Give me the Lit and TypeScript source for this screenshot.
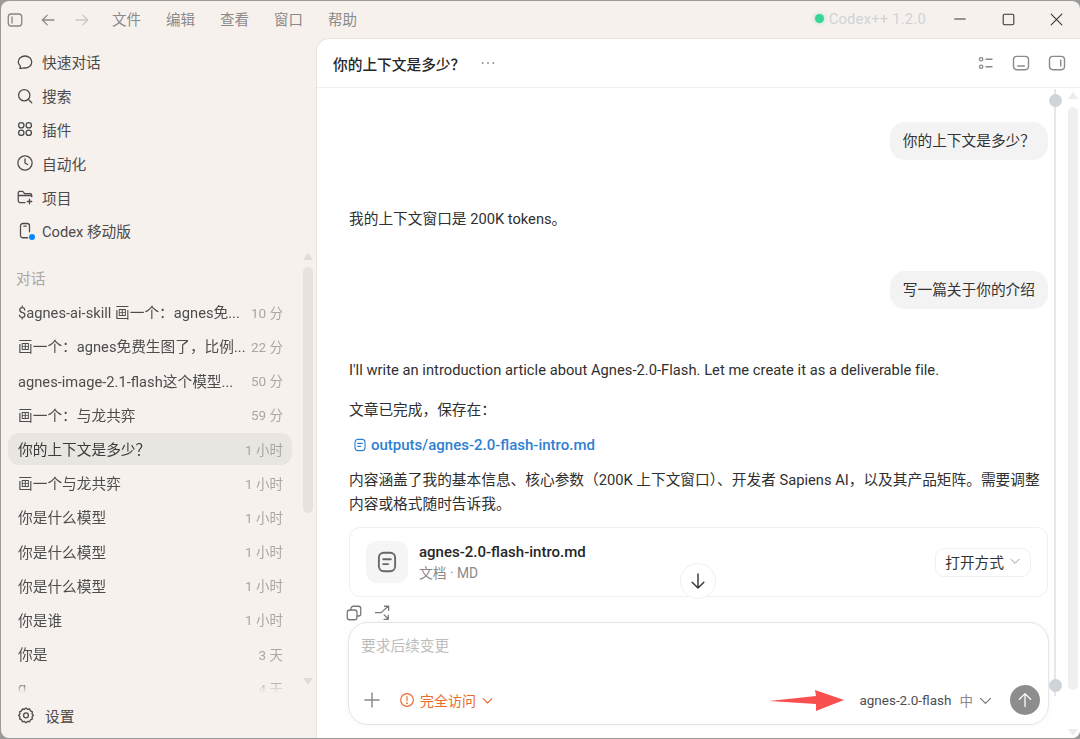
import { LitElement, html, css, svg } from "lit";
import { customElement } from "lit/decorators.js";

const ico = (body: unknown, size = 18, vb = 24) => html`<svg
  width=${size}
  height=${size}
  viewBox="0 0 ${vb} ${vb}"
  fill="none"
  stroke="currentColor"
  stroke-width="1.7"
  stroke-linecap="round"
  stroke-linejoin="round"
>${body}</svg>`;

const icons = {
  panel: svg`<rect x="3" y="4" width="18" height="16" rx="4"/><path d="M8 8v8"/>`,
  back: svg`<path d="M20 12H5M11 5.5 4.5 12l6.5 6.5"/>`,
  forward: svg`<path d="M4 12h15M13 5.5l6.5 6.5-6.5 6.5"/>`,
  chat: svg`<path d="M12 4c5 0 9 3.4 9 8s-4 8-9 8c-2 0-5 .8-7 .6 1-1 1.2-2.2.8-3.2C4 15.800 3 14 3 12c0-4.600 4-8 9-8z"/>`,
  search: svg`<circle cx="11" cy="11" r="7.500"/><path d="m17 17 4 4"/>`,
  plugins: svg`<circle cx="7" cy="7" r="3.600"/><circle cx="17" cy="7" r="3.600"/><circle cx="7" cy="17" r="3.600"/><circle cx="17" cy="17" r="3.600"/>`,
  clock: svg`<circle cx="12" cy="12" r="9.500"/><path d="M12 6.500V12l3.500 2"/>`,
  folder: svg`<path d="M12 19.500H6a3 3 0 0 1-3-3V6.500a2 2 0 0 1 2-2h4l2.500 3H19a2 2 0 0 1 2 2v2M3 10h18M18 15v6M15 18h6"/>`,
  phone: svg`<path d="M15.500 21H9a3 3 0 0 1-3-3V5a3 3 0 0 1 3-3h6a3 3 0 0 1 3 3v8M10.500 5.500h3"/>`,
  gear: svg`<path d="M12 2.500l2 1.900 2.800-.4 1.200 2.500 2.500 1.300-.4 2.800L22 12.500l-1.900 1.900.4 2.800-2.500 1.300-1.200 2.500-2.800-.4-2 1.900-2-1.900-2.800.4-1.200-2.500-2.500-1.300.4-2.800L2 12.500l1.900-1.900-.4-2.800L6 6.500l1.200-2.500 2.800.4z"/><circle cx="12" cy="12.500" r="3.200"/>`,
  list: svg`<circle cx="5.500" cy="7" r="2.300"/><circle cx="5.500" cy="17" r="2.300"/><path d="M12 7h8M12 17h8"/>`,
  bottomPanel: svg`<rect x="3" y="4" width="18" height="16" rx="4"/><path d="M8 15.500h8"/>`,
  sidePanel: svg`<rect x="3" y="4" width="18" height="16" rx="4"/><path d="M16.500 8.500v7"/>`,
  doc: svg`<rect x="4.500" y="3.500" width="15" height="17" rx="4.500"/><path d="M8.500 9.500h7M8.500 14h4.500"/>`,
  down: svg`<path d="M12 3.500v17M5 13.500l7 7 7-7"/>`,
  copy: svg`<rect x="3" y="8" width="13" height="13" rx="3.500"/><path d="M8 8V6a3 3 0 0 1 3-3h7a3 3 0 0 1 3 3v7a3 3 0 0 1-3 3h-2"/>`,
  branch: svg`<path d="M2 11.500h7.500L19 3M14 3h5.500v5.500M13.500 14.500 19 20M19 15v5.500h-5.500"/>`,
  plus: svg`<path d="M12 3.500v17M3.500 12h17"/>`,
  warn: svg`<circle cx="12" cy="12" r="9.500"/><path d="M12 7v6"/><circle cx="12" cy="16.700" r=".5"/>`,
  chevron: svg`<path d="m5 9 7 7 7-7"/>`,
  up: svg`<path d="M12 20.500v-17M4.500 11 12 3.500l7.500 7.500"/>`,
  minimize: svg`<path d="M3 12h18"/>`,
  maximize: svg`<rect x="3.500" y="3.500" width="17" height="17" rx="2.500"/>`,
  close: svg`<path d="M3.500 3.500l17 17M20.500 3.500l-17 17"/>`,
  dots: svg`<g fill="currentColor" stroke="none"><circle cx="4" cy="12" r="1.500"/><circle cx="12" cy="12" r="1.500"/><circle cx="20" cy="12" r="1.500"/></g>`,
};

const navItems = [
  ["快速对话", icons.chat],
  ["搜索", icons.search],
  ["插件", icons.plugins],
  ["自动化", icons.clock],
  ["项目", icons.folder],
  ["Codex 移动版", icons.phone],
] as const;

const threads = [
  ["$agnes-ai-skill 画一个：agnes免...", "10 分"],
  ["画一个：agnes免费生图了，比例...", "22 分"],
  ["agnes-image-2.1-flash这个模型...", "50 分"],
  ["画一个：与龙共弈", "59 分"],
  ["你的上下文是多少？", "1 小时"],
  ["画一个与龙共弈", "1 小时"],
  ["你是什么模型", "1 小时"],
  ["你是什么模型", "1 小时"],
  ["你是什么模型", "1 小时"],
  ["你是谁", "1 小时"],
  ["你是", "3 天"],
  ["q", "4 天"],
];

@customElement("app-root")
export class AppRoot extends LitElement {
  static styles = css`
    :host {
      display: block;
      width: 1080px;
      height: 739px;
      overflow: hidden;
      background: #9c9a98;
      font-family: "Roboto", "Noto Sans CJK SC", sans-serif;
      font-size: 14.7px;
      color: #2b2b2b;
    }
    svg { flex: none; }
    .window {
      position: relative;
      width: 1079px;
      height: 737px;
      margin: 1px 0 0 1px;
      background: #f7f1ee;
      border-radius: 8px;
      display: grid;
      grid-template-columns: 315px 1fr;
      grid-template-rows: 37px 1fr;
      overflow: hidden;
    }
    .titlebar {
      grid-column: 1 / 3;
      display: flex;
      align-items: center;
      padding: 0 0 0 5px;
      color: #858585;
    }
    .tb-icon { display: flex; margin-right: 15px; }
    .nav-arrow { display: flex; margin-right: 16px; color: #8b8b8b; }
    .nav-arrow.off { color: #c9c7c5; margin-right: 21px; }
    .menu { display: flex; gap: 25px; color: #8a8a8a; margin-bottom: 2px; font-size: 14.5px; }
    .status {
      margin-left: auto;
      display: flex;
      align-items: center;
      gap: 5px;
      color: #cfd3d6;
      margin-bottom: 2px;
      letter-spacing: 0.25px;
    }
    .dot {
      width: 9px;
      height: 9px;
      border-radius: 50%;
      background: #35d596;
      box-shadow: 0 0 4px #35d59680;
    }
    .controls { display: flex; margin-left: 10px; color: #333; }
    .controls span { width: 48px; display: flex; justify-content: center; }
    aside {
      display: flex;
      flex-direction: column;
      min-height: 0;
      position: relative;
    }
    .nav { padding: 7px 0 0 15px; }
    .nav-row {
      height: 33.8px;
      display: flex;
      align-items: center;
      gap: 10px;
      color: #4b4b4b;
    }
    .nav-icon { position: relative; display: flex; width: 16px; }
    .blue-dot {
      position: absolute;
      right: -3px;
      bottom: 0;
      width: 6px;
      height: 6px;
      border-radius: 50%;
      background: #0a84ff;
    }
    .section {
      margin: 19px 0 0 15px;
      height: 24px;
      line-height: 24px;
      color: #aaa7a4;
    }
    .threads {
      height: 397px;
      overflow: hidden;
      padding: 5px 0 0 7px;
      width: 284px;
      -webkit-mask-image: linear-gradient(#000 97%, transparent 100%);
      mask-image: linear-gradient(#000 97%, transparent 100%);
    }
    .thread {
      height: 32px;
      margin-bottom: 2.200px;
      border-radius: 11px;
      display: flex;
      align-items: center;
      justify-content: space-between;
      padding: 0 9px 0 10px;
      color: #4d4d4d;
    }
    .thread.active { background: #e9e5e1; color: #3b3b3b; }
    .thread b { font-weight: 400; white-space: nowrap; }
    .thread i { font-style: normal; flex: none; color: #a9a6a3; font-size: 13.500px; }
    .settings {
      margin-top: auto;
      height: 42px;
      display: flex;
      align-items: center;
      gap: 10px;
      padding: 0 0 2px 16px;
      color: #4b4b4b;
    }
    .sb-track {
      position: absolute;
      left: 302px;
      top: 229px;
      width: 10px;
      height: 246px;
      border-radius: 5px;
      background: #e8e2de;
    }
    .sb-up, .sb-down {
      position: absolute;
      left: 302px;
      width: 0;
      height: 0;
      border-left: 5px solid transparent;
      border-right: 5px solid transparent;
    }
    .sb-up { top: 215px; border-bottom: 7px solid #e2dcd8; }
    .sb-down { top: 640px; border-top: 7px solid #e2dcd8; }

    main {
      position: relative;
      background: #fff;
      border-top-left-radius: 13px;
      border-top: 1px solid #e6e3e1;
      border-left: 1px solid #e6e3e1;
      display: flex;
      flex-direction: column;
      min-height: 0;
    }
    header {
      height: 48px;
      flex: none;
      display: flex;
      align-items: center;
      padding: 0 13px 0 16px;
      border-bottom: 1px solid #f0efee;
      color: #8a8a8a;
    }
    header h1 {
      margin: 0 15px 0 0;
      font-size: 14.7px;
      font-weight: 500;
      color: #262626;
    }
    .dots { display: flex; color: #909090; }
    .head-actions { margin-left: auto; display: flex; gap: 16px; align-items: center; }
    .chat {
      flex: 1;
      min-height: 0;
      padding: 34px 32px 0;
      color: #2f2f2f;
    }
    .bubble-row { display: flex; justify-content: flex-end; }
    .bubble {
      height: 38px;
      line-height: 38px;
      padding: 0 13px;
      background: #f3f3f3;
      border-radius: 15px;
      color: #333;
    }
    p { margin: 0; line-height: 24px; }
    .answer-1 { margin: 47px 0 0; }
    .bubble-row.second { margin-top: 40px; }
    .answer-2 { margin-top: 49px; letter-spacing: 0.03px; }
    .gap { margin-top: 16px; }
    .gap-link { margin-top: 11px; }
    .link {
      display: flex;
      align-items: center;
      gap: 3px;
      color: #2f80d2;
      font-weight: 500;
      font-size: 15px;
      padding-left: 3px;
    }
    .file {
      margin-top: 11px;
      height: 68px;
      border: 1px solid #f1f0ef;
      border-radius: 11px;
      display: flex;
      align-items: center;
      padding: 0 16px;
      gap: 11px;
    }
    .file-icon {
      width: 42px;
      height: 42px;
      border-radius: 11px;
      background: #f5f5f5;
      color: #666;
      display: flex;
      align-items: center;
      justify-content: center;
    }
    .file-name { font-weight: 500; font-size: 15px; color: #262626; line-height: 21px; }
    .file-type { color: #8a8a8a; font-size: 13.800px; line-height: 20px; }
    .open {
      margin-left: auto;
      box-sizing: border-box;
      height: 29px;
      padding: 0 8px 2px 9px;
      border: 1px solid #f1f0ef;
      border-radius: 9px;
      display: flex;
      align-items: center;
      gap: 4px;
      color: #333;
    }
    .open svg { color: #999; }
    .tools {
      box-sizing: border-box;
      display: flex;
      gap: 11px;
      height: 25px;
      padding-top: 6px;
      align-items: center;
      color: #777;
      margin: 0 0 0 -4px;
    }
    .composer {
      box-sizing: border-box;
      height: 103px;
      margin: 0 -1px;
      border: 1px solid #e6e5e4;
      border-radius: 20px;
      box-shadow: 0 0 6px #0000000a;
      padding: 12px 8px 9px 12px;
      display: flex;
      flex-direction: column;
      background: #fff;
    }
    .placeholder { color: #bdbdbd; line-height: 22px; }
    .comp-row { margin-top: auto; display: flex; align-items: center; height: 30px; }
    .plus { color: #888; display: flex; margin: 0 17px 0 1px; }
    .access { color: #ea6a2a; display: flex; align-items: center; gap: 5px; font-size: 14px; }
    .access svg:last-child { margin-left: -1px; }
    .model {
      position: relative;
      margin-left: auto;
      display: flex;
      align-items: center;
      gap: 4px;
      color: #4f4f4f;
      font-size: 13.500px;
    }
    .model .tier { color: #8a8a8a; margin-left: 4px; }
    .model svg { color: #777; }
    .send {
      margin-left: 16px;
      width: 30px;
      height: 30px;
      border-radius: 50%;
      background: #8d8d8d;
      color: #fff;
      display: flex;
      align-items: center;
      justify-content: center;
    }
    .to-bottom {
      position: absolute;
      left: 363px;
      top: 524px;
      width: 34px;
      height: 34px;
      background: #fff;
      border: 1px solid #efefef;
      border-radius: 50%;
      display: flex;
      align-items: center;
      justify-content: center;
      color: #333;
    }
    .rail {
      position: absolute;
      left: 737px;
      top: 50px;
      width: 2px;
      height: 607px;
      background: #e6e7ea;
    }
    .knob {
      position: absolute;
      left: 732px;
      width: 13px;
      height: 13px;
      border-radius: 50%;
      background: #cfd3da;
    }
    .knob.top { top: 55px; }
    .knob.bottom { top: 640px; }
    .chat-sb {
      position: absolute;
      left: 751px;
      top: 68px;
      width: 10px;
      height: 583px;
      border-radius: 5px;
      background: #efefef;
    }
    .chat-up, .chat-down {
      position: absolute;
      left: 751px;
      width: 0;
      height: 0;
      border-left: 5px solid transparent;
      border-right: 5px solid transparent;
    }
    .chat-up { top: 53px; border-bottom: 7px solid #ebebeb; }
    .chat-down { top: 690px; border-top: 7px solid #ebebeb; }
    .arrow { position: absolute; left: -90px; top: -3px; }
    .model svg.arrow { color: #f9504f; }
  `;

  render() {
    return html`<div class="window">
      <div class="titlebar">
        <span class="tb-icon">${ico(icons.panel, 18)}</span>
        <span class="nav-arrow">${ico(icons.back, 18)}</span>
        <span class="nav-arrow off">${ico(icons.forward, 18)}</span>
        <div class="menu">
          <span>文件</span><span>编辑</span><span>查看</span><span>窗口</span><span>帮助</span>
        </div>
        <div class="status"><span class="dot"></span>Codex++ 1.2.0</div>
        <div class="controls">
          <span>${ico(icons.minimize, 14)}</span>
          <span>${ico(icons.maximize, 15)}</span>
          <span>${ico(icons.close, 15)}</span>
        </div>
      </div>

      <aside>
        <div class="nav">
          ${navItems.map(
            ([label, icon]) => html`<div class="nav-row">
              <span class="nav-icon">
                ${ico(icon, 18)}
                ${label.startsWith("Codex") ? html`<span class="blue-dot"></span>` : ""}
              </span>
              ${label}
            </div>`
          )}
        </div>
        <div class="section">对话</div>
        <div class="threads">
          ${threads.map(
            ([title, age], i) => html`<div class="thread ${i === 4 ? "active" : ""}">
              <b>${title}</b><i>${age}</i>
            </div>`
          )}
        </div>
        <span class="sb-up"></span>
        <span class="sb-track"></span>
        <span class="sb-down"></span>
        <div class="settings">${ico(icons.gear, 18)} 设置</div>
      </aside>

      <main>
        <header>
          <h1>你的上下文是多少？</h1>
          <span class="dots">${ico(icons.dots, 16)}</span>
          <div class="head-actions">
            ${ico(icons.list, 18)} ${ico(icons.bottomPanel, 20)} ${ico(icons.sidePanel, 20)}
          </div>
        </header>
        <div class="chat">
          <div class="bubble-row"><span class="bubble">你的上下文是多少？</span></div>
          <p class="answer-1">我的上下文窗口是 200K tokens。</p>
          <div class="bubble-row second"><span class="bubble">写一篇关于你的介绍</span></div>
          <p class="answer-2">I'll write an introduction article about Agnes-2.0-Flash. Let me create it as a deliverable file.</p>
          <p class="gap">文章已完成，保存在：</p>
          <p class="gap-link link">${ico(icons.doc, 16)}outputs/agnes-2.0-flash-intro.md</p>
          <p class="gap-link">内容涵盖了我的基本信息、核心参数（200K 上下文窗口）、开发者 Sapiens AI，以及其产品矩阵。需要调整内容或格式随时告诉我。</p>
          <div class="file">
            <span class="file-icon">${ico(icons.doc, 26)}</span>
            <div>
              <div class="file-name">agnes-2.0-flash-intro.md</div>
              <div class="file-type">文档 · MD</div>
            </div>
            <div class="open">打开方式 ${ico(icons.chevron, 14)}</div>
          </div>
          <div class="tools">${ico(icons.copy, 18)} ${ico(icons.branch, 18)}</div>
          <div class="composer">
            <div class="placeholder">要求后续变更</div>
            <div class="comp-row">
              <span class="plus">${ico(icons.plus, 20)}</span>
              <span class="access">${ico(icons.warn, 16)} 完全访问 ${ico(icons.chevron, 15)}</span>
              <div class="model">
                <svg class="arrow" width="76" height="26" viewBox="0 0 76 26">
                  <path fill="currentColor" d="M0 14 L47 9 L46 3 L75 13 L47 24 L47 17 Z" />
                </svg>
                agnes-2.0-flash <span class="tier">中</span> ${ico(icons.chevron, 17)}
              </div>
              <span class="send">${ico(icons.up, 18)}</span>
            </div>
          </div>
        </div>
        <span class="to-bottom">${ico(icons.down, 20)}</span>
        <span class="rail"></span>
        <span class="knob top"></span>
        <span class="knob bottom"></span>
        <span class="chat-up"></span>
        <span class="chat-sb"></span>
        <span class="chat-down"></span>
      </main>
    </div>`;
  }
}
